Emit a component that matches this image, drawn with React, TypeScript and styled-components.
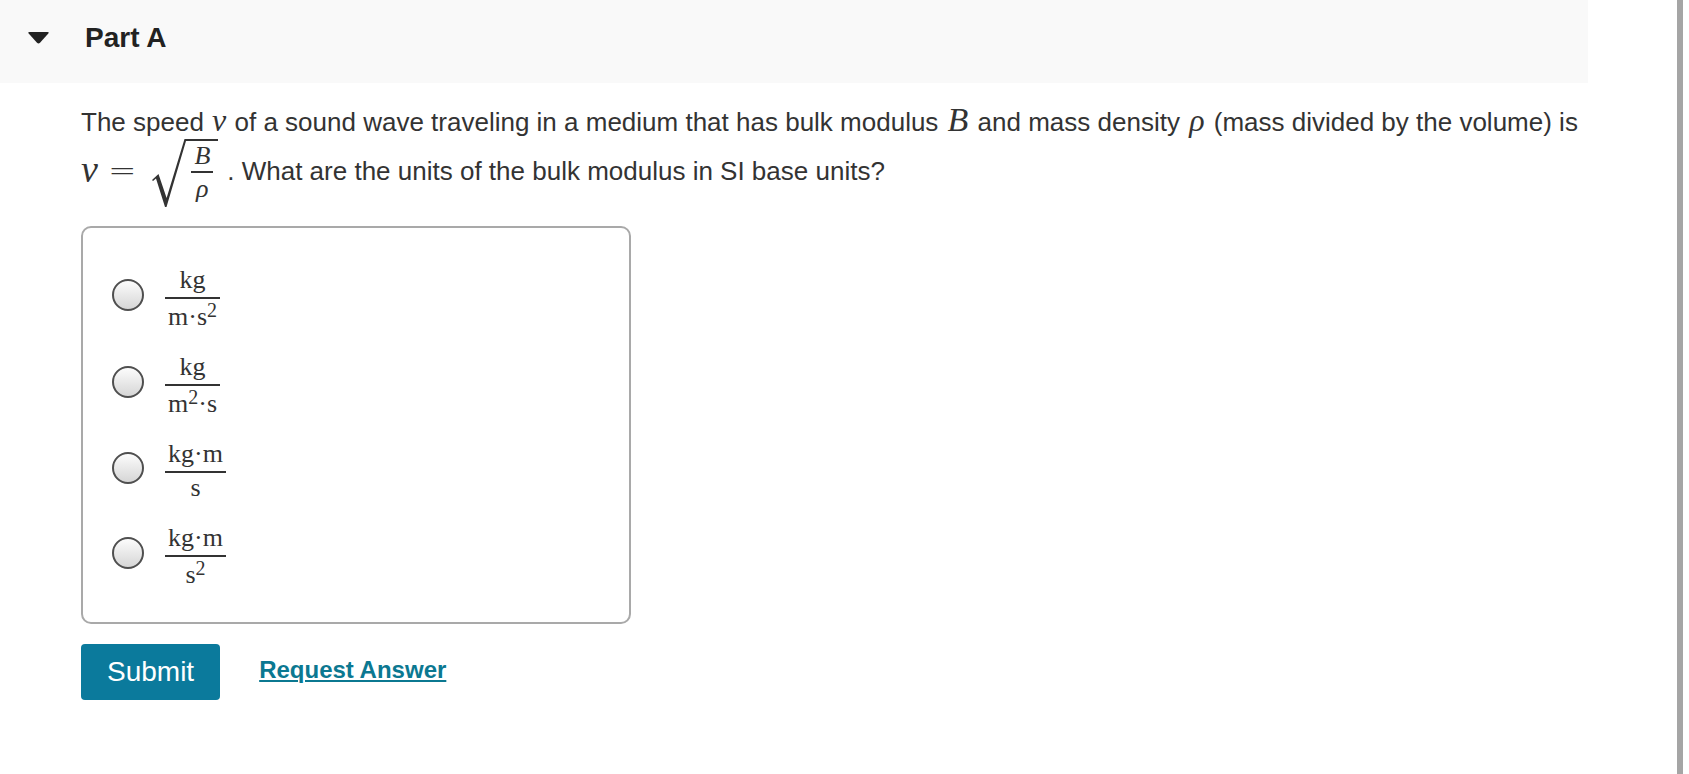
import React from "react";
import styled, { createGlobalStyle } from "styled-components";

const GlobalStyle = createGlobalStyle`
  *, *::before, *::after { box-sizing: border-box; }
  body {
    margin: 0;
    background: #ffffff;
    color: #333333;
    font-family: "Liberation Sans", Arial, sans-serif;
    font-size: 26px;
  }
`;

const Page = styled.div`
  display: flex;
  min-height: 100vh;
  padding-right: 6px;
`;

const Part = styled.main`
  flex: 1;
  margin-right: 89px;
`;

const Divider = styled.div`
  flex: none;
  width: 6px;
  background: #a5a5a5;
`;

const Header = styled.h2`
  margin: 0;
  background: #f9f9f9;
  font-size: 28px;
`;

const Toggle = styled.button`
  display: flex;
  align-items: center;
  gap: 35px;
  width: 100%;
  height: 83px;
  padding: 0 28px 8px;
  border: 0;
  background: none;
  color: #222222;
  font: inherit;
  text-align: left;
  cursor: pointer;
`;

const Body = styled.div`
  padding: 20px 0 24px 81px;
`;

const Question = styled.p`
  margin: 0 0 19px;
  line-height: 34px;
`;

const Variable = styled.var<{ $size: number; $space?: number }>`
  margin: 0 ${(p) => p.$space ?? 0}px;
  font-family: "Liberation Serif", "Times New Roman", serif;
  font-size: ${(p) => p.$size}px;
  font-style: italic;
  line-height: 1;
`;

const Equation = styled.span`
  display: inline-flex;
  align-items: center;
  height: 68px;
  margin-right: 9px;
  vertical-align: middle;
`;

const LeftSide = styled.span`
  display: flex;
  align-items: baseline;
  gap: 10px;
  padding: 0 16px 8px 0;
`;

const EqualSign = styled.span`
  font-family: "DejaVu Sans Light", "DejaVu Sans", sans-serif;
  font-size: 34px;
  font-weight: 200;
  line-height: 1;
`;

const Radicand = styled.span`
  display: flex;
  align-items: flex-start;
  align-self: stretch;
  padding: 0 5px;
  border-top: 2px solid currentColor;
`;

const Fraction = styled.span`
  display: inline-flex;
  flex-direction: column;
  font-family: "Liberation Serif", "Times New Roman", serif;
  font-size: 26px;
  line-height: 29px;
  text-align: center;
`;

const Numerator = styled.span<{ $gap?: number }>`
  padding: 0 3px ${(p) => p.$gap ?? 0}px;
  border-bottom: 2px solid currentColor;
`;

const Denominator = styled.span<{ $gap?: number }>`
  padding: ${(p) => p.$gap ?? 0}px 3px 0;
`;

const Exponent = styled.sup`
  font-size: 20px;
  line-height: 0;
  vertical-align: 8px;
`;

const Choices = styled.fieldset`
  display: flex;
  flex-direction: column;
  gap: 21px;
  width: 100%;
  max-width: 550px;
  margin: 0 0 20px;
  padding: 37px 29px 33px;
  border: 2px solid #a9a9a9;
  border-radius: 10px;
`;

const Choice = styled.label`
  display: flex;
  align-items: center;
  gap: 21px;
  cursor: pointer;
`;

const Radio = styled.input`
  appearance: none;
  width: 32px;
  height: 32px;
  margin: 0 0 6px;
  border: 2px solid #4f4f4f;
  border-radius: 50%;
  background: linear-gradient(#fcfcfc, #d6d6d6);

  &:checked {
    background: radial-gradient(circle, #333333 7px, #ececec 8px);
  }
`;

const Actions = styled.div`
  display: flex;
  align-items: center;
  gap: 39px;
`;

const Submit = styled.button`
  height: 56px;
  padding: 0 26px;
  border: 0;
  border-radius: 4px;
  background: #0b7a9c;
  color: #ffffff;
  font: inherit;
  font-size: 28px;
  cursor: pointer;
`;

const RequestLink = styled.a`
  padding-bottom: 4px;
  color: #0b7891;
  font-size: 24px;
  font-weight: bold;
  text-decoration-thickness: 2px;
  text-underline-offset: 2px;
`;

type Unit = { id: string; over: string; under: React.ReactNode; raised: boolean };

const units: Unit[] = [
  { id: "kg-per-m-s2", over: "kg", under: <>m·s<Exponent>2</Exponent></>, raised: true },
  { id: "kg-per-m2-s", over: "kg", under: <>m<Exponent>2</Exponent>·s</>, raised: true },
  { id: "kg-m-per-s", over: "kg·m", under: "s", raised: false },
  { id: "kg-m-per-s2", over: "kg·m", under: <>s<Exponent>2</Exponent></>, raised: true },
];

function Caret() {
  return (
    <svg width="22" height="12" viewBox="0 0 22 12" aria-hidden="true">
      <path d="M1.500 0H19.500Q21.500 0 20.300 1.500L12 10.800Q10.500 12.300 9 10.800L.7 1.500Q-.5 0 1.500 0Z" fill="#222222" />
    </svg>
  );
}

function RadicalSign() {
  return (
    <svg width="34" height="68" viewBox="0 0 34 68" aria-hidden="true">
      <path d="M0 41L6.500 35L14.600 59L32.500 0H34V2L14.500 68H13L4 39.500L1 42Z" fill="#333333" />
    </svg>
  );
}

export default function App() {
  return (
    <>
      <GlobalStyle />
      <Page>
        <Part>
          <Header>
            <Toggle type="button" aria-expanded="true">
              <Caret />
              Part A
            </Toggle>
          </Header>
          <Body>
            <Question>
              The speed <Variable $size={32} $space={1}>v</Variable> of a sound wave traveling in a medium that has
              bulk modulus <Variable $size={34} $space={2}>B</Variable> and mass
              density <Variable $size={32} $space={2}>ρ</Variable> (mass divided by the volume) is{" "}
              <Equation>
                <LeftSide>
                  <Variable $size={38}>v</Variable>
                  <EqualSign>=</EqualSign>
                </LeftSide>
                <RadicalSign />
                <Radicand>
                  <Fraction>
                    <Numerator $gap={1}><var>B</var></Numerator>
                    <Denominator $gap={1}><var>ρ</var></Denominator>
                  </Fraction>
                </Radicand>
              </Equation>
              . What are the units of the bulk modulus in SI base units?
            </Question>
            <Choices aria-label="Units of the bulk modulus">
              {units.map((unit) => (
                <Choice key={unit.id}>
                  <Radio type="radio" name="unit" value={unit.id} />
                  <Fraction>
                    <Numerator $gap={3}>{unit.over}</Numerator>
                    <Denominator $gap={unit.raised ? 3 : 0}>{unit.under}</Denominator>
                  </Fraction>
                </Choice>
              ))}
            </Choices>
            <Actions>
              <Submit type="submit">Submit</Submit>
              <RequestLink href="#answer">Request Answer</RequestLink>
            </Actions>
          </Body>
        </Part>
        <Divider />
      </Page>
    </>
  );
}
